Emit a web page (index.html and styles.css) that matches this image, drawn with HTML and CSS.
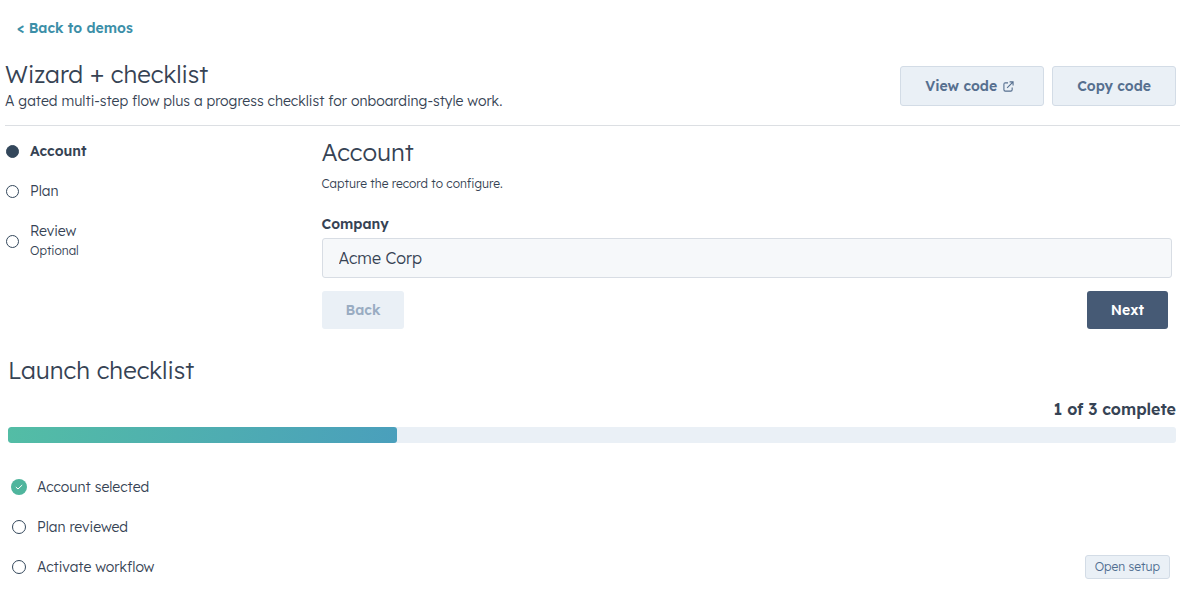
FILE: index.html
```html
<!DOCTYPE html>
<html lang="en">
<head>
<meta charset="utf-8">
<meta name="viewport" content="width=device-width, initial-scale=1">
<title>Wizard + checklist</title>
<link rel="stylesheet" href="styles.css">
</head>
<body>
<nav class="crumb"><a class="back-link" href="#demos">&lt; Back to demos</a></nav>
<header class="page-header">
  <div class="heading">
    <h1 class="title">Wizard + checklist</h1>
    <p class="subtitle">A gated multi-step flow plus a progress checklist for onboarding-style work.</p>
  </div>
  <div class="actions">
    <a class="button button-secondary view-code" href="#code">View code
      <svg class="external" viewBox="0 0 12 12" aria-hidden="true"><path d="M5.500 2H2.500Q1 2 1 3.500V9.500Q1 11 2.500 11H8.500Q10 11 10 9.500V7M7.200 1H11V4.800M11 1L4.500 7.500"/></svg>
    </a>
    <button class="button button-secondary" type="button">Copy code</button>
  </div>
</header>
<main>
  <section class="wizard">
    <ol class="steps">
      <li class="step step-current" aria-current="step"><span class="dot dot-filled"></span><span>Account</span></li>
      <li class="step"><span class="dot"></span><span>Plan</span></li>
      <li class="step"><span class="dot"></span><span>Review<small class="step-note">Optional</small></span></li>
    </ol>
    <form class="panel">
      <h2 class="title">Account</h2>
      <p class="caption">Capture the record to configure.</p>
      <label class="label" for="company">Company</label>
      <input class="field" id="company" type="text" value="Acme Corp">
      <div class="panel-actions">
        <button class="button button-disabled" type="button" disabled>Back</button>
        <button class="button button-primary" type="button">Next</button>
      </div>
    </form>
  </section>
  <section class="checklist">
    <h2 class="title">Launch checklist</h2>
    <p class="progress-text" id="progress-text">1 of 3 complete</p>
    <div class="track" role="progressbar" aria-labelledby="progress-text" aria-valuemin="0" aria-valuemax="3" aria-valuenow="1"><div class="fill" style="width: 33.33%"></div></div>
    <ul class="tasks">
      <li class="task"><svg class="task-icon" viewBox="0 0 16 16" aria-hidden="true"><circle class="done" cx="8" cy="8" r="8"/><path class="tick" d="M4.800 8L7 10L11.200 6"/></svg><span>Account selected</span></li>
      <li class="task"><svg class="task-icon" viewBox="0 0 16 16" aria-hidden="true"><circle class="open" cx="8" cy="8" r="6.500"/></svg><span>Plan reviewed</span></li>
      <li class="task"><svg class="task-icon" viewBox="0 0 16 16" aria-hidden="true"><circle class="open" cx="8" cy="8" r="6.500"/></svg><span>Activate workflow</span><button class="button-small" type="button">Open setup</button></li>
    </ul>
  </section>
</main>
</body>
</html>
```
FILE: styles.css
```css
* {
  box-sizing: border-box;
}

body {
  margin: 0;
  background: #fff;
  color: #364354;
  font-family: "Lexend Deca", Inter, sans-serif;
  font-size: 14px;
  font-weight: 300;
  line-height: 20px;
}

h1, h2, p, ol, ul {
  margin: 0;
  padding: 0;
}

ol, ul {
  list-style: none;
}

.crumb {
  padding: 18px 17px;
}

.back-link {
  display: block;
  width: max-content;
  color: #3c8fa8;
  font-weight: 600;
  text-decoration: none;
}

.page-header {
  display: flex;
  justify-content: space-between;
  align-items: flex-start;
  margin-left: 5px;
  padding: 2px 4px 14px 0;
  border-bottom: 1px solid #dcdfe3;
}

.title {
  font-size: 24px;
  font-weight: 300;
  line-height: 32px;
}

.subtitle {
  margin-top: 1px;
}

.actions {
  display: flex;
  gap: 8px;
  padding-top: 8px;
}

.button {
  display: flex;
  align-items: center;
  justify-content: center;
  padding: 9px 24px;
  border: 0;
  border-radius: 3px;
  font: inherit;
  font-weight: 600;
  text-decoration: none;
  cursor: pointer;
}

.button-secondary {
  border: 1px solid #d3dce6;
  background: #eaf0f6;
  color: #566f8f;
}

.view-code {
  gap: 6px;
  padding-right: 29px;
}

.external {
  width: 11px;
  height: 11px;
  fill: none;
  stroke: currentColor;
  stroke-width: 1.2;
}

.button-disabled {
  background: #eaf0f6;
  color: #99acc2;
  cursor: default;
}

.button-primary {
  background: #465a75;
  color: #fff;
}

.wizard {
  display: grid;
  grid-template-columns: 1fr 3fr;
  gap: 32px;
  padding: 10px 8px 0 6px;
}

.steps {
  display: flex;
  flex-direction: column;
  gap: 20px;
  padding-top: 5px;
}

.step {
  display: flex;
  align-items: center;
  gap: 11px;
}

.step-current {
  font-weight: 600;
}

.step-note {
  display: block;
  font-size: 12px;
}

.dot {
  width: 13px;
  height: 13px;
  border: 1px solid #33475b;
  border-radius: 50%;
}

.dot-filled {
  background: #33475b;
}

.caption {
  margin-top: 6px;
  font-size: 12px;
}

.label {
  display: block;
  margin-top: 20px;
  font-weight: 600;
}

.field {
  display: block;
  width: 100%;
  height: 40px;
  margin-top: 4px;
  padding: 0 16px;
  border: 1px solid #d8dde4;
  border-radius: 3px;
  background: #f6f8fa;
  color: #364354;
  font: inherit;
  font-size: 16px;
}

.panel-actions {
  display: flex;
  justify-content: space-between;
  padding: 13px 4px 0 0;
}

.checklist {
  padding: 25px 4px 0 8px;
}

.progress-text {
  margin-top: 11px;
  font-size: 16px;
  font-weight: 600;
  line-height: 24px;
  text-align: right;
}

.track {
  height: 16px;
  margin-top: 6px;
  border-radius: 3px;
  background: #eaf0f6;
  overflow: hidden;
}

.fill {
  height: 100%;
  border-radius: 3px;
  background: linear-gradient(100deg, #53bda5, #4a9fbc);
}

.tasks {
  padding: 24px 6px 0 3px;
}

.task {
  display: flex;
  align-items: center;
  min-height: 40px;
  gap: 10px;
}

.task-icon {
  width: 16px;
  height: 16px;
}

.done {
  fill: #4fb59d;
}

.tick {
  fill: none;
  stroke: #fff;
}

.open {
  fill: none;
  stroke: #33475b;
}

.button-small {
  margin-left: auto;
  padding: 3px 9px;
  border: 1px solid #d3dce6;
  border-radius: 3px;
  background: #eaf0f6;
  color: #506e91;
  font: inherit;
  font-size: 12px;
  line-height: 16px;
  cursor: pointer;
}
```
